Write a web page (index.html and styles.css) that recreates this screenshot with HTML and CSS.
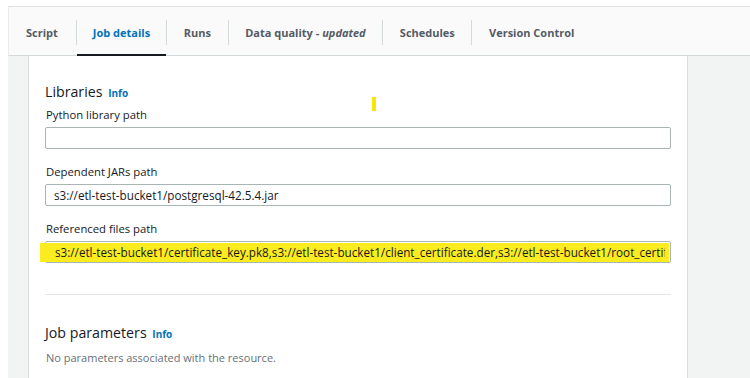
FILE: index.html
```html
<!DOCTYPE html>
<html lang="en">
<head>
<meta charset="utf-8">
<title>Job details</title>
<link rel="stylesheet" href="styles.css">
</head>
<body>
<div class="app">
  <nav class="tabs">
    <div class="tab first">Script</div>
    <span class="sep"></span>
    <div class="tab active">Job details</div>
    <span class="sep"></span>
    <div class="tab">Runs</div>
    <span class="sep"></span>
    <div class="tab">Data quality - <em>updated</em></div>
    <span class="sep"></span>
    <div class="tab">Schedules</div>
    <span class="sep"></span>
    <div class="tab">Version Control</div>
  </nav>
  <div class="main">
    <div class="gutter"></div>
    <div class="panel">
      <section class="section">
        <h2 class="heading">Libraries <a class="info">Info</a></h2>
        <div class="field">
          <label class="label">Python library path</label>
          <div class="input"></div>
        </div>
        <div class="field">
          <label class="label">Dependent JARs path</label>
          <div class="input">s3://etl-test-bucket1/postgresql-42.5.4.jar</div>
        </div>
        <div class="field">
          <label class="label">Referenced files path</label>
          <div class="input highlighted"><span class="input-text">s3://etl-test-bucket1/certificate_key.pk8,s3://etl-test-bucket1/client_certificate.der,s3://etl-test-bucket1/root_certificate.pem</span></div>
        </div>
      </section>
      <hr class="divider">
      <section class="section params">
        <h2 class="heading">Job parameters <a class="info">Info</a></h2>
        <p class="muted">No parameters associated with the resource.</p>
      </section>
      <span class="mark"></span>
    </div>
    <div class="side"></div>
  </div>
</div>
</body>
</html>
```
FILE: styles.css
```css
* { box-sizing: border-box; }
html, body {
  margin: 0;
  padding: 0;
  background: #ffffff;
  height: 100%;
  overflow: hidden;
}
body {
  font-family: "Open Sans", "Noto Sans", sans-serif;
  color: #16191f;
}
.app {
  margin: 6px 0 0 8px;
  height: calc(100% - 6px);
  display: flex;
  flex-direction: column;
}
.tabs {
  display: flex;
  align-items: center;
  height: 50px;
  padding-top: 2px;
  background: #fafafa;
  border-top: 1px solid #e1e3e3;
  border-bottom: 1px solid #d5dbdb;
  border-left: 1px solid #ebebeb;
}
.tab {
  position: relative;
  height: 100%;
  display: flex;
  align-items: center;
  padding: 0 16.6px;
  font-size: 11px;
  font-weight: 700;
  color: #545b64;
  white-space: nowrap;
}
.tab.first { padding-left: 17px; padding-right: 18px; }
.tab em { font-style: italic; margin-left: 3px; }
.tab.active { color: #0073bb; padding: 0 16px; }
.tab.active::after {
  content: "";
  position: absolute;
  left: 0;
  right: 0;
  bottom: -1px;
  height: 2px;
  background: #16191f;
}
.sep {
  width: 1px;
  height: 25px;
  background: #d5dbdb;
}
.main {
  flex: 1;
  display: flex;
  background: #f2f3f3;
  margin-left: -8px;
}
.gutter {
  width: 28px;
  background: #f2f3f3;
  border-left: 8px solid #ffffff;
}
.panel {
  position: relative;
  width: 660px;
  background: #ffffff;
  border-left: 1px solid #dcdede;
  border-right: 1px solid #dcdede;
  padding: 26px 16px 0 16px;
}
.side { flex: 1; }
.heading {
  margin: 0;
  font-size: 14.2px;
  line-height: 20px;
  font-weight: 400;
  color: #16191f;
}
.info {
  margin-left: 2px;
  font-size: 10px;
  font-weight: 700;
  color: #0073bb;
}
.field { margin-top: 4px; }
.field + .field { margin-top: 15px; }
.label {
  display: block;
  font-size: 11.3px;
  line-height: 16px;
  margin-bottom: 4px;
  padding-left: 1px;
}
.input {
  position: relative;
  height: 22px;
  border: 1px solid #a9b4b5;
  border-radius: 2px;
  padding: 0 5px 0 8px;
  font-size: 11.7px;
  line-height: 20px;
  white-space: nowrap;
  color: #16191f;
}
.input-text {
  position: relative;
  display: block;
  overflow: hidden;
  text-overflow: clip;
  padding-left: 1px;
}
.highlighted::before {
  content: "";
  position: absolute;
  left: -6px;
  right: 1px;
  top: 1px;
  bottom: 0;
  background: #fbec1f;
}
.divider {
  margin: 31px 0 0 0;
  border: 0;
  border-top: 1px solid #e6e8e8;
}
.params { padding-top: 28px; }
.muted {
  margin: 6px 0 0 1px;
  font-size: 11px;
  line-height: 16px;
  color: #687078;
}
.mark {
  position: absolute;
  left: 343px;
  top: 41px;
  width: 4px;
  height: 14px;
  background: #f7e600;
}
```
